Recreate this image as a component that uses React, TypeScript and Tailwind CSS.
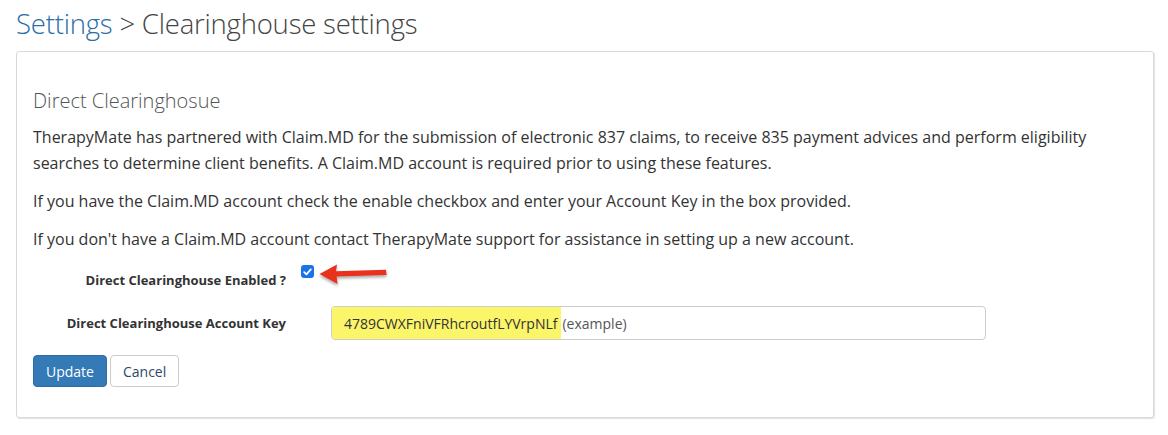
import React from "react";

const paragraphs = [
  "TherapyMate has partnered with Claim.MD for the submission of electronic 837 claims, to receive 835 payment advices and perform eligibility searches to determine client benefits. A Claim.MD account is required prior to using these features.",
  "If you have the Claim.MD account check the enable checkbox and enter your Account Key in the box provided.",
  "If you don't have a Claim.MD account contact TherapyMate support for assistance in setting up a new account.",
];

function CheckedBox() {
  return (
    <div className="w-[13px] h-[13px] rounded-[3px] bg-[#1a73e8] flex items-center justify-center">
      <svg width="9" height="8" viewBox="0 0 9 8">
        <path d="M1.2 4.2 L3.4 6.3 L7.8 1.4" fill="none" stroke="#fff" strokeWidth="1.8" strokeLinecap="round" strokeLinejoin="round" />
      </svg>
    </div>
  );
}

function RedArrow() {
  return (
    <svg width="74" height="26" viewBox="0 0 74 26" className="overflow-visible">
      <defs>
        <filter id="arrowShadow" x="-20%" y="-50%" width="140%" height="200%">
          <feDropShadow dx="0" dy="2" stdDeviation="1.5" floodColor="#000" floodOpacity="0.35" />
        </filter>
      </defs>
      <path
        d="M2.5 14 L20 4.5 L19 11.2 L69 9.8 L69.6 15 L19.6 16.4 L20.6 24 Z"
        fill="#e8301c"
        filter="url(#arrowShadow)"
      />
    </svg>
  );
}

export default function App() {
  return (
    <div className="bg-white w-[1168px] h-[435px] px-4 pt-[6px]" style={{ fontFamily: '"Open Sans", "Liberation Sans", sans-serif' }}>
      <h1 className="text-[27.5px] leading-[36px] font-light text-[#444] tracking-[-0.2px]">
        <span className="text-[#2a6ea6]">Settings</span> &gt; Clearinghouse settings
      </h1>

      <div className="mt-[9px] w-[1138px] border border-[#d9d9d9] rounded-[3px] shadow-[1px_1px_1px_rgba(0,0,0,0.12)] px-4 pt-[36px] pb-[30px]">
        <h4 className="text-[20px] leading-[26px] font-light text-[#555] mb-[10px]">Direct Clearinghosue</h4>

        {paragraphs.map((p, i) => (
          <p key={i} className="text-[16px] leading-[26px] text-[#333] mb-[12px]">
            {p}
          </p>
        ))}

        <div className="flex items-start">
          <label className="w-[253px] text-right text-[13px] leading-[20px] font-bold text-[#333] pt-[6px]">
            Direct Clearinghouse Enabled ?
          </label>
          <div className="ml-[15px] mt-[1px]">
            <CheckedBox />
          </div>
          <div className="ml-[3px] -mt-[4px]">
            <RedArrow />
          </div>
        </div>

        <div className="flex items-center mt-[16px]">
          <label className="w-[253px] text-right text-[13px] leading-[20px] font-bold text-[#333]">
            Direct Clearinghouse Account Key
          </label>
          <div className="ml-[45px] w-[655px] h-[34px] border border-[#ccc] rounded-[4px] flex items-stretch overflow-hidden text-[14px]">
            <div className="bg-[#fbf56a] pl-3 pr-[4px] flex items-center text-[#333]">4789CWXFniVFRhcroutfLYVrpNLf</div>
            <div className="flex items-center pl-[1px] text-[#555]">(example)</div>
          </div>
        </div>

        <div className="flex gap-[3px] mt-[15px]">
          <button className="h-[32px] px-3 rounded-[4px] bg-[#337ab7] border border-[#2e6da4] text-white text-[14px]">Update</button>
          <button className="h-[32px] px-3 rounded-[4px] bg-white border border-[#ccc] text-[#2d4864] text-[14px]">Cancel</button>
        </div>
      </div>
    </div>
  );
}
